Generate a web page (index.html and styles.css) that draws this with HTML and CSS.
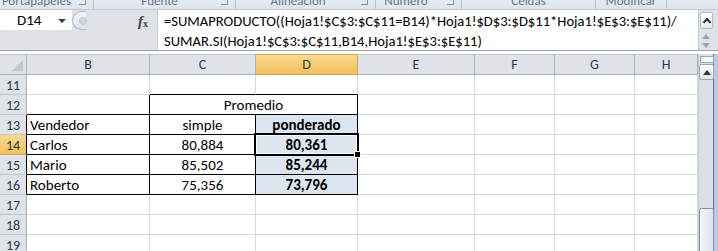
FILE: index.html
```html
<!DOCTYPE html>
<html lang="es">
<head>
    <meta charset="UTF-8">
    <title>Promedio ponderado</title>
    <link rel="stylesheet" href="styles.css">
</head>
<body>
    <div class="ribbon">
        <div class="grp g1"><span>Portapapeles</span><i class="launch"></i></div>
        <div class="grp g2"><span>Fuente</span><i class="launch"></i></div>
        <div class="grp g3"><span>Alineación</span><i class="launch"></i></div>
        <div class="grp g4"><span>Número</span><i class="launch"></i></div>
        <div class="grp g5"><span>Celdas</span></div>
        <div class="grp g6"><span>Modificar</span></div>
    </div>

    <div class="fbar">
        <div class="namecol">
            <div class="namebox">D14<span class="dd"></span></div>
        </div>
        <div class="grip"><span class="dot"></span></div>
        <div class="fx"><i>f</i><sub>x</sub></div>
        <div class="formula">
            <div>=SUMAPRODUCTO((Hoja1!$C$3:$C$11=B14)*Hoja1!$D$3:$D$11*Hoja1!$E$3:$E$11)/</div>
            <div>SUMAR.SI(Hoja1!$C$3:$C$11,B14,Hoja1!$E$3:$E$11)</div>
        </div>
        <div class="fscroll">
            <div class="fbtn"><span class="chev"></span></div>
            <span class="tri up"></span>
            <span class="tri down"></span>
        </div>
    </div>

    <div class="sheet">
        <div class="grid">
            <!-- headers -->
            <div class="hd corner"></div>
            <div class="hd">B</div>
            <div class="hd">C</div>
            <div class="hd hd-sel">D</div>
            <div class="hd">E</div>
            <div class="hd">F</div>
            <div class="hd">G</div>
            <div class="hd">H</div>

            <!-- 11 -->
            <div class="rh">11</div>
            <div class="c"></div>
            <div class="c bb"></div>
            <div class="c bb"></div>
            <div class="c"></div>
            <div class="c"></div>
            <div class="c"></div>
            <div class="c"></div>

            <!-- 12 -->
            <div class="rh">12</div>
            <div class="c br bb"></div>
            <div class="c br bb center span2">Promedio</div>
            <div class="c"></div>
            <div class="c"></div>
            <div class="c"></div>
            <div class="c"></div>

            <!-- 13 -->
            <div class="rh br">13</div>
            <div class="c br bb">Vendedor</div>
            <div class="c br bb center">simple</div>
            <div class="c br bb center bold blue">ponderado</div>
            <div class="c"></div>
            <div class="c"></div>
            <div class="c"></div>
            <div class="c"></div>

            <!-- 14 -->
            <div class="rh br rh-sel">14</div>
            <div class="c br bb">Carlos</div>
            <div class="c br bb center">80,884</div>
            <div class="c br bb center bold blue sel">80,361</div>
            <div class="c"></div>
            <div class="c"></div>
            <div class="c"></div>
            <div class="c"></div>

            <!-- 15 -->
            <div class="rh br">15</div>
            <div class="c br bb">Mario</div>
            <div class="c br bb center">85,502</div>
            <div class="c br bb center bold blue">85,244</div>
            <div class="c"></div>
            <div class="c"></div>
            <div class="c"></div>
            <div class="c"></div>

            <!-- 16 -->
            <div class="rh br">16</div>
            <div class="c br bb">Roberto</div>
            <div class="c br bb center">75,356</div>
            <div class="c br bb center bold blue">73,796</div>
            <div class="c"></div>
            <div class="c"></div>
            <div class="c"></div>
            <div class="c"></div>

            <!-- 17 -->
            <div class="rh">17</div>
            <div class="c"></div><div class="c"></div><div class="c"></div><div class="c"></div>
            <div class="c"></div><div class="c"></div><div class="c"></div>

            <!-- 18 -->
            <div class="rh">18</div>
            <div class="c"></div><div class="c"></div><div class="c"></div><div class="c"></div>
            <div class="c"></div><div class="c"></div><div class="c"></div>

            <!-- 19 -->
            <div class="rh">19</div>
            <div class="c"></div><div class="c"></div><div class="c"></div><div class="c"></div>
            <div class="c"></div><div class="c"></div><div class="c"></div>
        </div>
        <div class="vscroll">
            <div class="split"></div>
            <div class="vbtn"><span class="tri up dark"></span></div>
            <div class="thumb"></div>
        </div>
        <div class="edge"></div>
    </div>
</body>
</html>
```

FILE: styles.css
```css
html, body { margin: 0; padding: 0; }
body { width: 718px; height: 251px; overflow: hidden; background: #fff; font-family: Carlito, Lato, "Liberation Sans", sans-serif; color: #000; }

/* ribbon group labels, cut at the top */
.ribbon { display: flex; height: 9px; overflow: hidden; background: linear-gradient(#e6ebf1, #dee4ec); border-bottom: 1px solid #c2c9d3; }
.grp { position: relative; box-sizing: border-box; border-right: 1px solid #b9c2ce; text-align: center; font-size: 13px; color: #6b7686; }
.grp span { display: block; margin-top: -8px; line-height: 17px; }
.g1 { width: 94px; } .g2 { width: 142px; } .g3 { width: 140px; }
.g4 { width: 86px; } .g5 { width: 134px; } .g6 { width: 71px; }
.launch { position: absolute; right: 7px; top: 0; width: 6px; height: 4px; border-right: 1px solid #8994a3; border-bottom: 1px solid #8994a3; }
.g1 span { padding-right: 20px; } .g2 span { padding-right: 10px; } .g3 span { padding-right: 15px; } .g4 span { padding-right: 25px; }

/* formula bar */
.fbar { display: flex; height: 40px; background: #dfe3e8; border-bottom: 1px solid #9aa3ae; }
.namecol { width: 72px; }
.namebox { position: relative; height: 20px; background: #fff; font-size: 15px; line-height: 21px; padding-left: 17px; box-sizing: border-box; }
.dd { position: absolute; left: 58px; top: 9px; border-left: 4px solid transparent; border-right: 4px solid transparent; border-top: 4px solid #3c3c3c; }
.grip { position: relative; width: 14px; height: 19px; margin-top: 1px; box-sizing: border-box; border: 1px solid #b5bcc6; border-right: none; border-radius: 10px 0 0 10px; background: linear-gradient(#f2f4f7, #dfe3e8); }
.dot { position: absolute; left: 6px; top: 5px; width: 6px; height: 6px; border-radius: 50%; background: #d0d5dc; border: 1px solid #c2c8d0; }
.fx { width: 71px; text-align: right; padding-right: 9px; box-sizing: border-box; font-family: "Liberation Serif", serif; font-size: 15px; font-weight: bold; color: #444; line-height: 22px; }
.fx sub { font-size: 10px; vertical-align: -1px; }
.formula { flex: 1; background: #fff; border-left: 1px solid #c7ccd3; padding-left: 6px; font-size: 14.6px; line-height: 20px; padding-top: 1px; white-space: nowrap; }
.fscroll { position: relative; width: 20px; background: #dfe3e8; border-left: 1px solid #c7ccd3; box-sizing: border-box; }
.fbtn { position: absolute; left: 1px; top: 2px; width: 13px; height: 17px; box-sizing: border-box; border: 1px solid #b3bac4; background: linear-gradient(#fbfcfd, #e6e9ee); border-radius: 2px; }
.chev { position: absolute; left: 3px; top: 6px; width: 4px; height: 4px; border-left: 2px solid #333; border-top: 2px solid #333; transform: rotate(45deg); }
.tri { position: absolute; left: 3px; width: 0; height: 0; border-left: 4px solid transparent; border-right: 4px solid transparent; }
.tri.up { border-bottom: 5px solid #9ea6b1; }
.tri.down { border-top: 5px solid #9ea6b1; }
.fscroll .up { top: 24px; }
.fscroll .down { top: 33px; }

/* sheet */
.sheet { position: relative; display: flex; margin-top: 3px; }
.grid { display: grid; grid-template-columns: 27px 123px 106px 102px 117px 80px 80px 63px; grid-template-rows: 21px repeat(9, 20px); font-size: 15px; }
.hd, .rh { box-sizing: border-box; background: #dfe3e8; color: #2e3a4b; border-right: 1px solid #a9b0ba; border-bottom: 1px solid #a9b0ba; text-align: center; }
.hd { border-top: 1px solid #c4c9d0; font-size: 14px; line-height: 20px; }
.rh { font-size: 14px; line-height: 21px; border-bottom-color: #c4c9d0; }
.corner { position: relative; }
.corner::after { content: ""; position: absolute; right: 3px; bottom: 3px; border-left: 11px solid transparent; border-bottom: 11px solid #c2c7ce; }
.hd-sel, .rh-sel { background: linear-gradient(#f8d98f, #f1c15b); border-color: #dea048; }
.c { box-sizing: border-box; border-right: 1px solid #d8d8d8; border-bottom: 1px solid #d8d8d8; line-height: 21px; padding: 0 3px; white-space: nowrap; }
.rh.br { border-right: 1px solid #000; }
.c.br { border-right-color: #000; }
.c.bb { border-bottom-color: #000; }
.center { text-align: center; }
.span2 { grid-column: span 2; }
.bold { font-weight: bold; }
.blue { background: #dce6f1; }
.sel { position: relative; }
.sel::after { content: ""; position: absolute; left: -2px; top: -2px; right: -2px; bottom: -2px; border: 2px solid #000; box-shadow: inset 0 0 0 1px #fff; }
.sel::before { content: ""; position: absolute; right: -4px; bottom: -4px; width: 5px; height: 5px; background: #000; border: 1px solid #fff; z-index: 2; }

/* vertical scrollbar */
.vscroll { position: relative; width: 16px; background: #dbe0e7; border-left: 1px solid #c8ced6; }
.split { position: absolute; left: 1px; top: 2px; width: 12px; height: 5px; border: 1px solid #9ea6b1; background: #f4f6f8; }
.vbtn { position: absolute; left: 0; top: 10px; width: 15px; height: 16px; box-sizing: border-box; border: 1px solid #9ea6b1; border-radius: 2px; background: linear-gradient(#fbfcfd, #e2e6eb); }
.tri.dark { border-bottom-color: #333; left: 3px; top: 5px; }
.thumb { position: absolute; left: 0; top: 154px; width: 15px; height: 60px; box-sizing: border-box; border: 1px solid #8a93a0; border-radius: 2px; background: linear-gradient(90deg, #f4f6f9, #dfe4ea); }
.edge { width: 4px; border-left: 1px solid #6d7785; background: #b5cbe8; }
```
